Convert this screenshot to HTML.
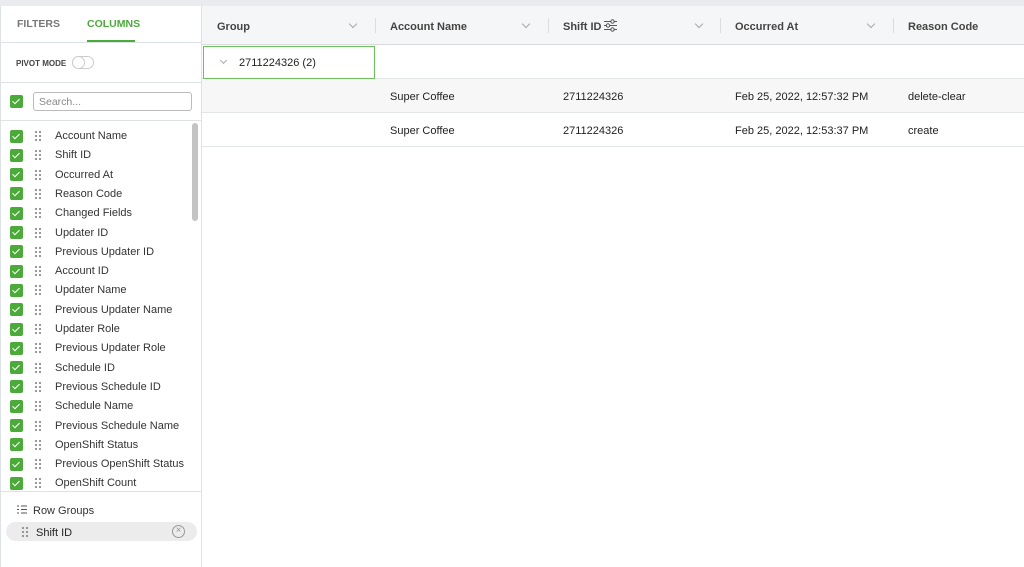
<!DOCTYPE html>
<html><head><style>
*{box-sizing:border-box;margin:0;padding:0}
body{width:1024px;height:567px;overflow:hidden;background:#fff;font-family:"Liberation Sans",sans-serif;font-size:11px;color:#222;position:relative}
.a{position:absolute}
.cb{position:absolute;width:13px;height:13px;background:#4caa3a;border-radius:2px}
.cb:after{content:"";position:absolute;left:4px;top:2px;width:3px;height:6px;border:solid #fff;border-width:0 1.5px 1.5px 0;transform:rotate(45deg)}
.grip{position:absolute;width:8px;height:12px;background-image:radial-gradient(circle,#999 1.1px,transparent 1.3px);background-size:4px 4px}
.hd{position:absolute;top:8px;height:39px;line-height:39px;font-weight:bold;color:#444;font-size:11px}
.chev{position:absolute;width:6px;height:6px;border:solid #aaa;border-width:0 1px 1px 0;transform:rotate(45deg)}
.sep{position:absolute;top:18px;width:1px;height:15px;background:#ddd}
.cell{position:absolute;font-size:11px;color:#222}
</style></head><body>
<div class="a" style="left:0;top:0;width:1024px;height:6px;background:#e9ebee"></div>
<div class="a" style="left:201px;top:6px;width:1px;height:561px;background:#dde2e6"></div>
<div class="a" style="left:0;top:6px;width:1px;height:561px;background:#dde2e6"></div>
<div class="a" style="left:17px;top:18px;font-weight:bold;color:#777;font-size:10.5px">FILTERS</div>
<div class="a" style="left:87px;top:18px;font-weight:bold;color:#4caa3a;font-size:10.5px">COLUMNS</div>
<div class="a" style="left:87px;top:40px;width:48px;height:2px;background:#4caa3a"></div>
<div class="a" style="left:0;top:42px;width:201px;height:1px;background:#dde2e6"></div>
<div class="a" style="left:16px;top:59px;font-weight:bold;color:#444;font-size:8px">PIVOT MODE</div>
<div class="a" style="left:72px;top:56px;width:22px;height:13px;border:1px solid #ccc;border-radius:7px"></div>
<div class="a" style="left:72px;top:56px;width:13px;height:13px;border:1px solid #ccc;border-radius:50%;background:#fff"></div>
<div class="a" style="left:0;top:82px;width:201px;height:1px;background:#dde2e6"></div>
<div class="cb" style="left:10px;top:95px"></div>
<div class="a" style="left:33px;top:92px;width:159px;height:19px;border:1px solid #bbb;border-radius:3px;padding:3px 5px;color:#888;font-size:10.5px">Search...</div>
<div class="a" style="left:0;top:120px;width:201px;height:1px;background:#dde2e6"></div>
<div class="a" style="left:192px;top:123px;width:6px;height:98px;background:#c4c4c4;border-radius:3px"></div>
<div id="list"></div>
<div class="a" style="left:0;top:491px;width:201px;height:1px;background:#dde2e6"></div>
<svg class="a" style="left:16px;top:505px" width="12" height="10"><path d="M1 1h2M1 4.5h2M1 8h2M5 1h6M5 4.5h6M5 8h6" stroke="#555" stroke-width="1"/></svg>
<div class="a" style="left:33px;top:505px;color:#333">Row Groups</div>
<div class="a" style="left:6px;top:522px;width:191px;height:19px;background:#ececec;border-radius:10px"></div>
<div class="grip" style="left:21px;top:526px"></div>
<div class="a" style="left:36px;top:527px;color:#222">Shift ID</div>
<div class="a" style="left:172px;top:525px;width:13px;height:13px;border:1px solid #999;border-radius:50%;color:#999;font-size:10px;line-height:10px;text-align:center">×</div>
<div class="a" style="left:202px;top:6px;width:822px;height:39px;background:#f5f6f7;border-bottom:1px solid #d9dcde"></div>
<div class="hd" style="left:217px">Group</div><div class="chev" style="left:350px;top:21px"></div><div class="sep" style="left:375px"></div>
<div class="hd" style="left:390px">Account Name</div><div class="chev" style="left:523px;top:21px"></div><div class="sep" style="left:548px"></div>
<div class="hd" style="left:563px">Shift ID</div>
<svg class="a" style="left:604px;top:19px" width="13" height="13"><path d="M0 2.5h13M0 6.5h13M0 10.5h13" stroke="#555" stroke-width="1"/><circle cx="8.5" cy="2.5" r="1.7" fill="#f5f6f7" stroke="#555"/><circle cx="4" cy="6.5" r="1.7" fill="#f5f6f7" stroke="#555"/><circle cx="8.5" cy="10.5" r="1.7" fill="#f5f6f7" stroke="#555"/></svg>
<div class="chev" style="left:696px;top:21px"></div><div class="sep" style="left:720px"></div>
<div class="hd" style="left:735px">Occurred At</div><div class="chev" style="left:868px;top:21px"></div><div class="sep" style="left:893px"></div>
<div class="hd" style="left:908px">Reason Code</div>
<div class="a" style="left:202px;top:78px;width:822px;height:1px;background:#e3e6e8"></div>
<div class="a" style="left:203px;top:46px;width:172px;height:33px;border:1px solid #6bbf5c"></div>
<div class="chev" style="left:221px;top:58px;width:5px;height:5px"></div>
<div class="cell" style="left:239px;top:57px">2711224326 (2)</div>
<div class="a" style="left:202px;top:79px;width:822px;height:34px;background:#f7f7f7;border-bottom:1px solid #e3e6e8"></div>
<div class="cell" style="left:390px;top:91px">Super Coffee</div><div class="cell" style="left:563px;top:91px">2711224326</div><div class="cell" style="left:735px;top:91px">Feb 25, 2022, 12:57:32 PM</div><div class="cell" style="left:908px;top:91px">delete-clear</div>
<div class="a" style="left:202px;top:146px;width:822px;height:1px;background:#e3e6e8"></div>
<div class="cell" style="left:390px;top:125px">Super Coffee</div><div class="cell" style="left:563px;top:125px">2711224326</div><div class="cell" style="left:735px;top:125px">Feb 25, 2022, 12:53:37 PM</div><div class="cell" style="left:908px;top:125px">create</div>
<script>
var n=["Account Name","Shift ID","Occurred At","Reason Code","Changed Fields","Updater ID","Previous Updater ID","Account ID","Updater Name","Previous Updater Name","Updater Role","Previous Updater Role","Schedule ID","Previous Schedule ID","Schedule Name","Previous Schedule Name","OpenShift Status","Previous OpenShift Status","OpenShift Count"],h="";
n.forEach(function(t,i){var y=136+i*19.3;h+='<div class="cb" style="left:10px;top:'+(y-6.5)+'px"></div><div class="grip" style="left:34px;top:'+(y-6)+'px"></div><div class="a" style="left:55px;top:'+(y-6)+'px;color:#333">'+t+'</div>';});
document.getElementById("list").innerHTML=h;
</script>
</body></html>
